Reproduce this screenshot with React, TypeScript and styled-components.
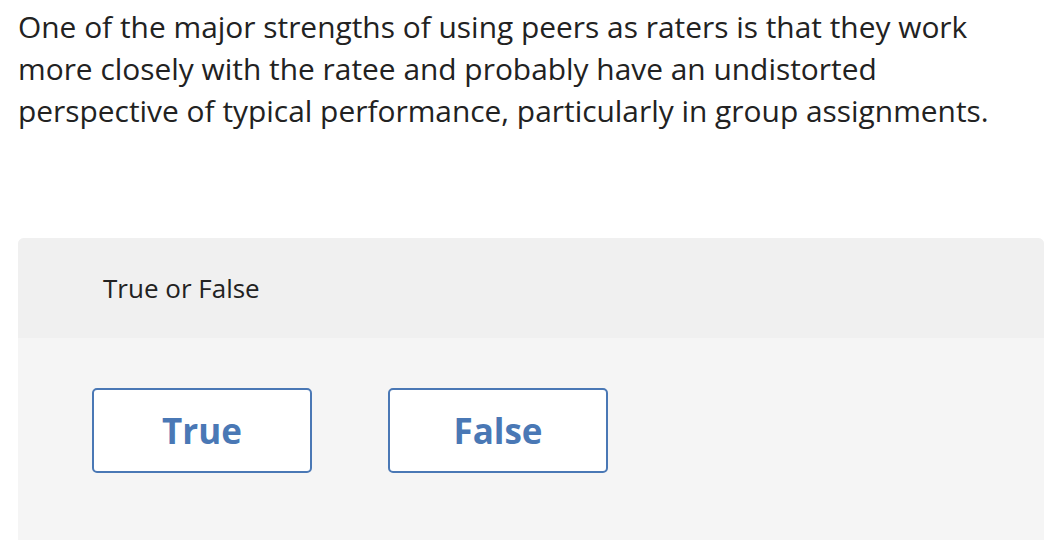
import React from "react";
import styled, { createGlobalStyle } from "styled-components";

const GlobalStyle = createGlobalStyle`
  html, body {
    margin: 0;
    padding: 0;
    background: #ffffff;
  }
  body {
    font-family: "Open Sans", "Lato", sans-serif;
    color: #212121;
  }
`;

const Page = styled.div`
  padding: 6px 4px 0 18px;
  overflow: hidden;
  height: 540px;
  box-sizing: border-box;
`;

const Question = styled.p`
  margin: 0;
  font-size: 29.9px;
  line-height: 42px;
  color: #222222;
  max-width: 1010px;
`;

const Panel = styled.section`
  margin-top: 106px;
  border-radius: 6px 6px 0 0;
  background: #f5f5f5;
  overflow: hidden;
`;

const PanelHeader = styled.div`
  height: 100px;
  background: #f0f0f0;
  display: flex;
  align-items: center;
  padding-left: 85px;
  font-size: 26px;
  color: #222222;
`;

const Choices = styled.div`
  display: flex;
  gap: 76px;
  padding: 50px 0 80px 74px;
`;

const Choice = styled.button`
  width: 220px;
  height: 85px;
  box-sizing: border-box;
  background: #ffffff;
  border: 2px solid #4a78b5;
  border-radius: 5px;
  font-family: "Open Sans", "Lato", sans-serif;
  font-weight: 700;
  font-size: 35px;
  color: #4a78b5;
  cursor: pointer;
`;

export default function App() {
  return (
    <>
      <GlobalStyle />
      <Page>
        <Question>
          One of the major strengths of using peers as raters is that they work
          more closely with the ratee and probably have an undistorted
          perspective of typical performance, particularly in group assignments.
        </Question>
        <Panel>
          <PanelHeader>True or False</PanelHeader>
          <Choices>
            <Choice>True</Choice>
            <Choice>False</Choice>
          </Choices>
        </Panel>
      </Page>
    </>
  );
}
